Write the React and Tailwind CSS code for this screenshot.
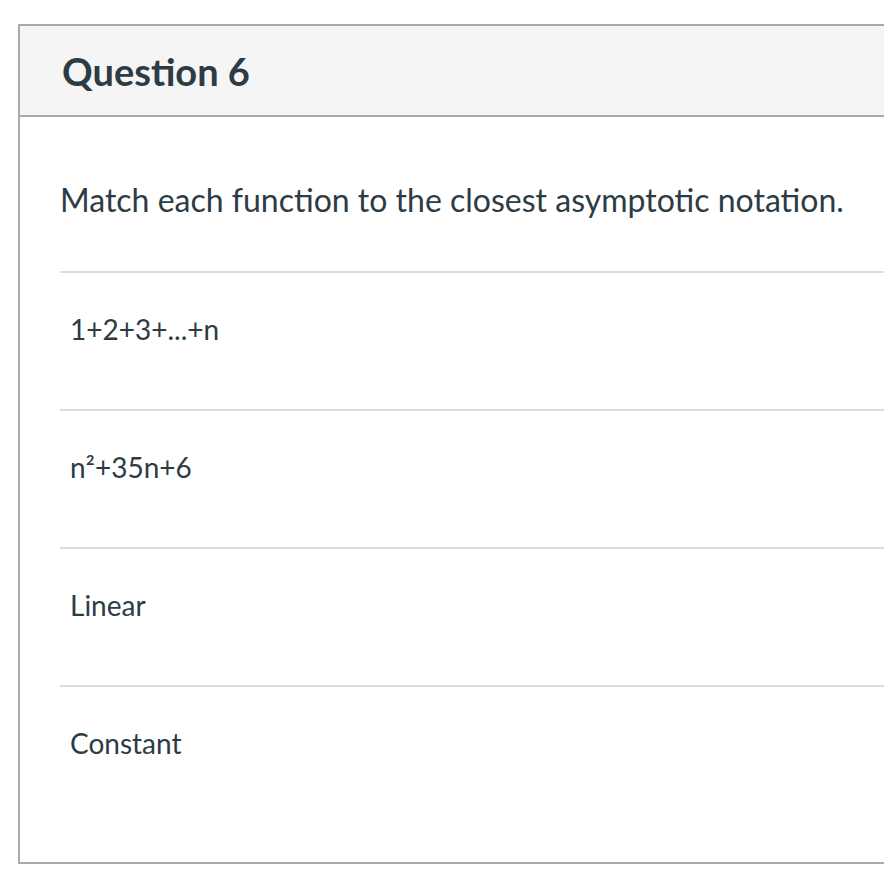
import React from "react";

const answers = [
  { id: 1, label: "1+2+3+...+n" },
  { id: 2, label: "n²+35n+6" },
  { id: 3, label: "Linear" },
  { id: 4, label: "Constant" },
];

export default function App() {
  return (
    <div
      className="w-[884px] min-h-[890px] overflow-hidden bg-white pt-[24px] text-[#2d3b45]"
      style={{ fontFamily: "Lato, 'Liberation Sans', sans-serif" }}
    >
      <div className="ml-[18px] border-l-2 border-t-2 border-b-2 border-[#a9a9a9]">
        <div className="h-[91px] flex items-center pl-[42px] bg-[#f5f5f5] border-b-2 border-[#a9a9a9]">
          <h2 className="text-[38px] font-bold leading-[46px]">Question 6</h2>
        </div>

        <div className="px-[40px] pr-0 pb-[39px]">
          <p className="mt-[63px] mb-[51px] text-[32px] leading-[40px]">
            Match each function to the closest asymptotic notation.
          </p>

          {answers.map((it) => (
            <div
              key={it.id}
              className="border-t-2 border-[#dddddd] pl-[10px] pt-[41px] pb-[64px]"
            >
              <span className="text-[28px] leading-[31px] block">{it.label}</span>
            </div>
          ))}
        </div>
      </div>
    </div>
  );
}
